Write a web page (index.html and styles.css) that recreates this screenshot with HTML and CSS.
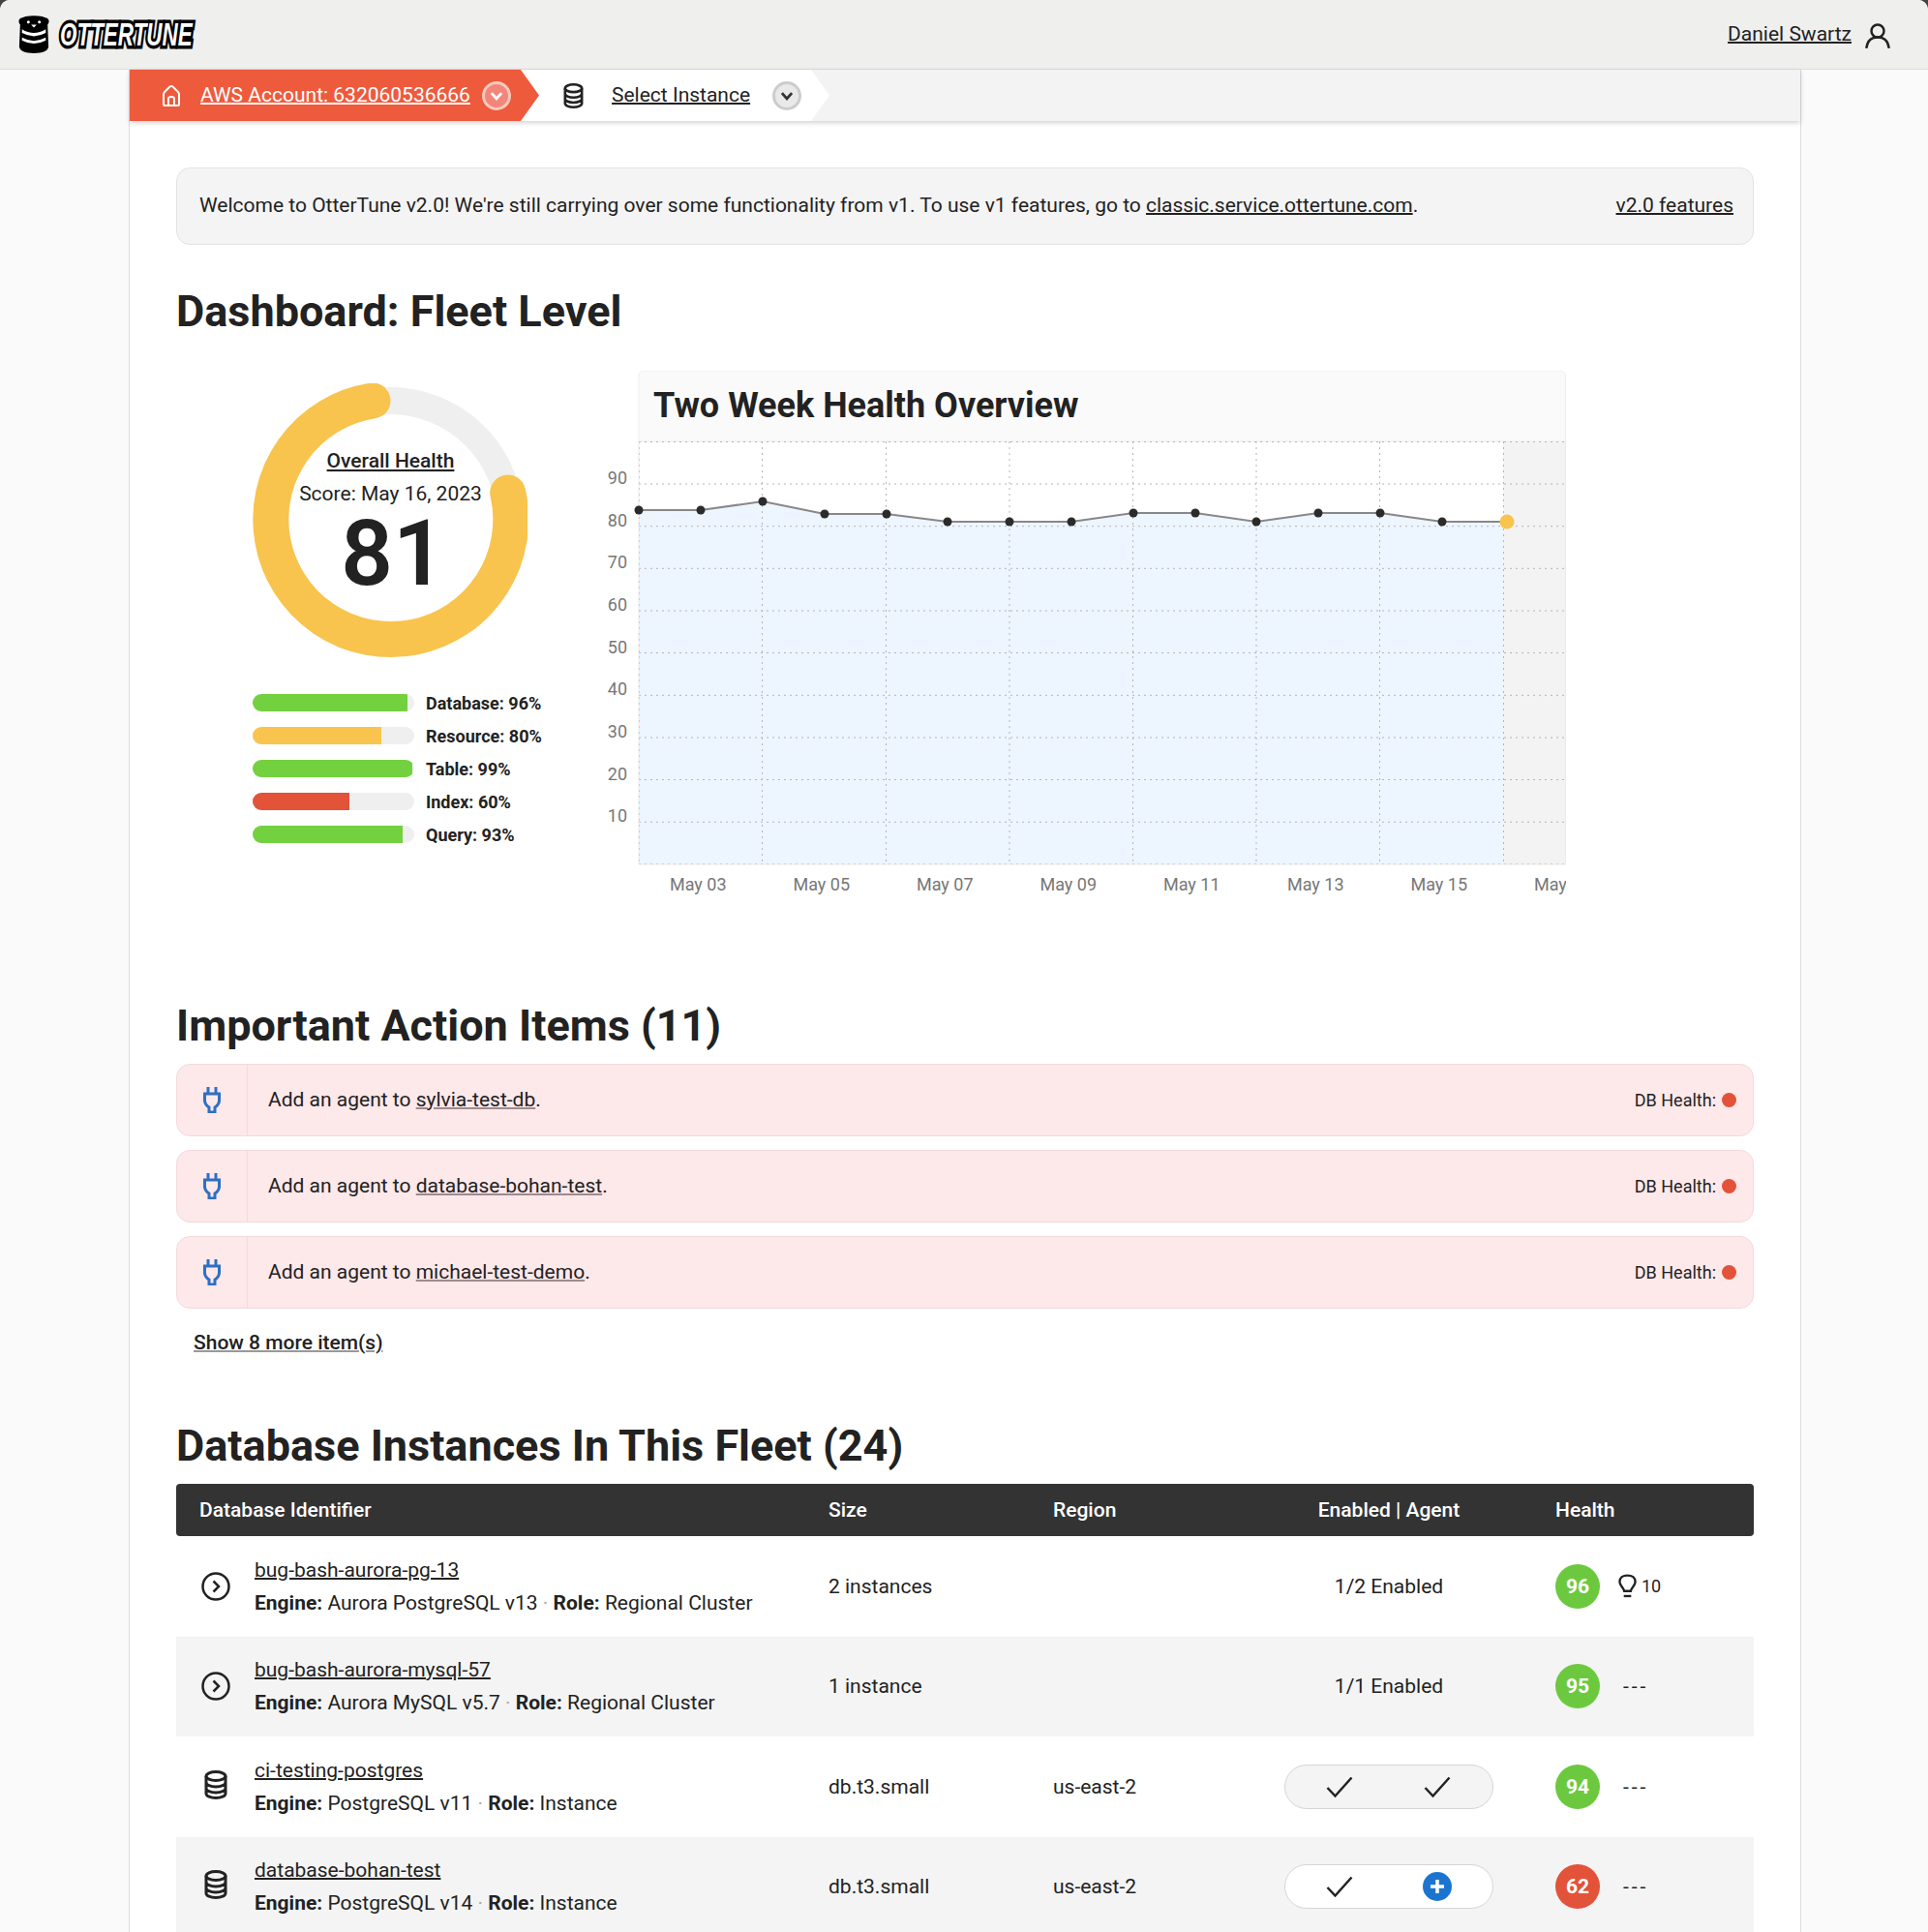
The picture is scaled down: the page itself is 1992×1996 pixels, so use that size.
FILE: index.html
```html
<!DOCTYPE html>
<html>
<head>
    <title>OtterTune</title>
    <link rel="stylesheet" href="styles.css">
</head>
<body>
<div class="page">
    <header class="topbar">
        <div class="logo">
            <svg class="logo-mark" viewBox="0 0 36 42">
                <path d="M3 3 L9 1 Q18 -1 27 1 L33 3 Q36 6 33 10 L34 34 Q33 41 18 41 Q3 41 2 34 L3 10 Q0 6 3 3Z" fill="#000"/>
                <circle cx="12" cy="7" r="1.6" fill="#fff"/>
                <circle cx="24" cy="7" r="1.6" fill="#fff"/>
                <path d="M15 10 H21 L18 13Z" fill="#fff"/>
                <path d="M5 15 Q18 23 31 15 L31 19 Q18 26 5 19Z M5 24 Q18 31 31 24 L31 27 Q18 34 5 27Z" fill="#fff"/>
            </svg>
            <span class="logo-text">OTTERTUNE</span>
        </div>
        <div class="user">
            <a href="#">Daniel Swartz</a>
            <svg class="user-icon" viewBox="0 0 26 26"><circle cx="13" cy="8" r="6.5"/><path d="M1.5 25 C2.5 18 7 14.5 13 14.5 S23.5 18 24.5 25"/></svg>
        </div>
    </header>

    <main class="content">
        <nav class="crumbs">
            <div class="crumb crumb-account">
                <svg class="crumb-home" viewBox="0 0 20 24"><path d="M2 21 V10.500 Q2 9 3.500 7.500 L8.500 2.500 Q10 1.500 11.500 2.500 L16.500 7.500 Q18 9 18 10.500 V21 Q18 22 17 22 H3 Q2 22 2 21Z"/><path d="M7 22 V15 Q7 13 10 13 Q13 13 13 15 V22"/></svg>
                <a href="#">AWS Account: 632060536666</a>
                <span class="crumb-toggle"><svg viewBox="0 0 14 14"><path d="M2.500 4.500 L7 9.500 L11.500 4.500"/></svg></span>
            </div>
            <div class="crumb crumb-instance">
                <svg class="db-icon crumb-db" viewBox="0 0 24 30"><ellipse cx="12" cy="6" rx="10" ry="4.5"/><path d="M2 6V24C2 26.5 6.500 28.500 12 28.500S22 26.500 22 24V6M2 12.500C2 15 6.500 17 12 17S22 15 22 12.500M2 18.500C2 21 6.500 23 12 23S22 21 22 18.500"/></svg>
                <a href="#">Select Instance</a>
                <span class="crumb-toggle"><svg viewBox="0 0 14 14"><path d="M2.500 4.500 L7 9.500 L11.500 4.500"/></svg></span>
            </div>
        </nav>

        <div class="inner">
            <div class="notice">
                <span>Welcome to OtterTune v2.0! We're still carrying over some functionality from v1. To use v1 features, go to <a href="#">classic.service.ottertune.com</a>.</span>
                <a href="#">v2.0 features</a>
            </div>

            <h2>Dashboard: Fleet Level</h2>
            <section class="overview">
                <div class="health">
                    <svg class="gauge" viewBox="261 395 284 284">
                        <circle class="gauge-track" cx="403" cy="537" r="124"/>
                        <path class="gauge-arc" d="M524.700 508 A124 124 0 1 1 385 413"/>
                        <text class="gauge-title" x="403.500" y="482">Overall Health</text>
                        <text class="gauge-date" x="403.500" y="516">Score: May 16, 2023</text>
                        <text class="gauge-score" x="406" y="603">81</text>
                    </svg>
                    <ul class="meters">
                        <li><span class="meter"><span class="meter-fill good" style="width: 160px"></span></span>Database: 96%</li>
                        <li><span class="meter"><span class="meter-fill warn" style="width: 133px"></span></span>Resource: 80%</li>
                        <li><span class="meter"><span class="meter-fill good" style="width: 165px"></span></span>Table: 99%</li>
                        <li><span class="meter"><span class="meter-fill bad" style="width: 100px"></span></span>Index: 60%</li>
                        <li><span class="meter"><span class="meter-fill good" style="width: 155px"></span></span>Query: 93%</li>
                    </ul>
                </div>

                <svg class="chart" viewBox="620 383 998 550">
                    <path class="chart-head" d="M660 456 V389 Q660 383 666 383 H1612 Q1617.500 383 1617.500 389 V456Z"/>
                    <text class="chart-title" x="675" y="431">Two Week Health Overview</text>
                    <rect class="chart-future" x="1553" y="456" width="64.500" height="437"/>
                    <path class="chart-area" d="M660 527 L724 527 L788 518 L852 531 L916 531 L979 539 L1043 539 L1107 539 L1171 530 L1235 530 L1298 539 L1362 530 L1426 530 L1490 539 L1553 539 V893 H660Z"/>
                    <g class="chart-grid">
                        <path d="M660 456.500 H1617"/>
                        <path d="M660 500 H1617"/>
                        <path d="M660 543.700 H1617"/>
                        <path d="M660 587.300 H1617"/>
                        <path d="M660 631 H1617"/>
                        <path d="M660 674.500 H1617"/>
                        <path d="M660 718.300 H1617"/>
                        <path d="M660 762 H1617"/>
                        <path d="M660 805.500 H1617"/>
                        <path d="M660 849.300 H1617"/>
                        <path d="M660 892.500 H1617"/>
                        <path d="M660.500 456 V893"/>
                        <path d="M787.500 456 V893"/>
                        <path d="M915.500 456 V893"/>
                        <path d="M1043 456 V893"/>
                        <path d="M1170.500 456 V893"/>
                        <path d="M1298 456 V893"/>
                        <path d="M1425.500 456 V893"/>
                        <path d="M1553.500 456 V893"/>
                    </g>
                    <path class="chart-border" d="M660 456 V893 H1617.500 V456"/>
                    <path class="chart-line" d="M660 527 L724 527 L788 518 L852 531 L916 531 L979 539 L1043 539 L1107 539 L1171 530 L1235 530 L1298 539 L1362 530 L1426 530 L1490 539 L1557 539"/>
                    <g class="chart-points">
                        <circle cx="660" cy="527" r="4.500"/>
                        <circle cx="724" cy="527" r="4.500"/>
                        <circle cx="788" cy="518" r="4.500"/>
                        <circle cx="852" cy="531" r="4.500"/>
                        <circle cx="916" cy="531" r="4.500"/>
                        <circle cx="979" cy="539" r="4.500"/>
                        <circle cx="1043" cy="539" r="4.500"/>
                        <circle cx="1107" cy="539" r="4.500"/>
                        <circle cx="1171" cy="530" r="4.500"/>
                        <circle cx="1235" cy="530" r="4.500"/>
                        <circle cx="1298" cy="539" r="4.500"/>
                        <circle cx="1362" cy="530" r="4.500"/>
                        <circle cx="1426" cy="530" r="4.500"/>
                        <circle cx="1490" cy="539" r="4.500"/>
                    </g>
                    <circle class="chart-today" cx="1557" cy="539" r="7.500"/>
                    <g class="chart-y">
                        <text x="648" y="500">90</text>
                        <text x="648" y="544">80</text>
                        <text x="648" y="587">70</text>
                        <text x="648" y="631">60</text>
                        <text x="648" y="675">50</text>
                        <text x="648" y="718">40</text>
                        <text x="648" y="762">30</text>
                        <text x="648" y="806">20</text>
                        <text x="648" y="849">10</text>
                    </g>
                    <g class="chart-x">
                        <text x="692" y="920">May 03</text>
                        <text x="819.500" y="920">May 05</text>
                        <text x="947" y="920">May 07</text>
                        <text x="1074.500" y="920">May 09</text>
                        <text x="1202" y="920">May 11</text>
                        <text x="1330" y="920">May 13</text>
                        <text x="1457.500" y="920">May 15</text>
                        <text x="1585" y="920">May 17</text>
                    </g>
                </svg>
            </section>

            <h2>Important Action Items (11)</h2>
            <div class="alerts">
                <div class="alert">
                    <div class="alert-icon"><svg class="plug" viewBox="0 0 18 27"><path d="M5 0V7M13 0V7M1.500 7H16.500V14Q16.500 18 12 21V26H6V21Q1.500 18 1.500 14Z"/></svg></div>
                    <div class="alert-text">Add an agent to <a href="#">sylvia-test-db</a>.</div>
                    <div class="alert-health">DB Health:<span class="dot"></span></div>
                </div>
                <div class="alert">
                    <div class="alert-icon"><svg class="plug" viewBox="0 0 18 27"><path d="M5 0V7M13 0V7M1.500 7H16.500V14Q16.500 18 12 21V26H6V21Q1.500 18 1.500 14Z"/></svg></div>
                    <div class="alert-text">Add an agent to <a href="#">database-bohan-test</a>.</div>
                    <div class="alert-health">DB Health:<span class="dot"></span></div>
                </div>
                <div class="alert">
                    <div class="alert-icon"><svg class="plug" viewBox="0 0 18 27"><path d="M5 0V7M13 0V7M1.500 7H16.500V14Q16.500 18 12 21V26H6V21Q1.500 18 1.500 14Z"/></svg></div>
                    <div class="alert-text">Add an agent to <a href="#">michael-test-demo</a>.</div>
                    <div class="alert-health">DB Health:<span class="dot"></span></div>
                </div>
            </div>
            <a class="show-more" href="#">Show 8 more item(s)</a>

            <h2 class="fleet-title">Database Instances In This Fleet (24)</h2>
            <div class="fleet">
                <div class="fleet-head">
                    <div>Database Identifier</div>
                    <div>Size</div>
                    <div>Region</div>
                    <div class="enabled-col">Enabled | Agent</div>
                    <div>Health</div>
                </div>

                <div class="fleet-row">
                    <div class="db-cell">
                        <svg class="cluster-icon" viewBox="0 0 30 30"><circle cx="15" cy="15" r="13.500"/><path d="M12.500 9.500 L18 15 L12.500 20.500"/></svg>
                        <div>
                            <a href="#">bug-bash-aurora-pg-13</a>
                            <p><b>Engine:</b> Aurora PostgreSQL v13 <i>·</i> <b>Role:</b> Regional Cluster</p>
                        </div>
                    </div>
                    <div>2 instances</div>
                    <div></div>
                    <div class="enabled-col">1/2 Enabled</div>
                    <div class="health-cell">
                        <span class="badge good">96</span>
                        <svg class="bulb" viewBox="0 0 20 26"><path d="M6.500 18.500 C6 15 1.500 13 1.500 8.500 C1.500 4 5 1.500 10 1.500 S18.500 4 18.500 8.500 C18.500 13 14 15 13.500 18.500Z"/><path d="M6 24 H14"/></svg>
                        <span class="tips">10</span>
                    </div>
                </div>

                <div class="fleet-row">
                    <div class="db-cell">
                        <svg class="cluster-icon" viewBox="0 0 30 30"><circle cx="15" cy="15" r="13.500"/><path d="M12.500 9.500 L18 15 L12.500 20.500"/></svg>
                        <div>
                            <a href="#">bug-bash-aurora-mysql-57</a>
                            <p><b>Engine:</b> Aurora MySQL v5.7 <i>·</i> <b>Role:</b> Regional Cluster</p>
                        </div>
                    </div>
                    <div>1 instance</div>
                    <div></div>
                    <div class="enabled-col">1/1 Enabled</div>
                    <div class="health-cell"><span class="badge good">95</span><span class="none">---</span></div>
                </div>

                <div class="fleet-row">
                    <div class="db-cell">
                        <svg class="db-icon" viewBox="0 0 24 30"><ellipse cx="12" cy="6" rx="10" ry="4.5"/><path d="M2 6V24C2 26.500 6.500 28.500 12 28.500S22 26.500 22 24V6M2 12.500C2 15 6.500 17 12 17S22 15 22 12.500M2 18.500C2 21 6.500 23 12 23S22 21 22 18.500"/></svg>
                        <div>
                            <a href="#">ci-testing-postgres</a>
                            <p><b>Engine:</b> PostgreSQL v11 <i>·</i> <b>Role:</b> Instance</p>
                        </div>
                    </div>
                    <div>db.t3.small</div>
                    <div>us-east-2</div>
                    <div class="toggle-pill filled">
                        <svg class="check" viewBox="0 0 28 24"><path d="M1.500 13 L9.500 21.500 L26.500 2.500"/></svg>
                        <svg class="check" viewBox="0 0 28 24"><path d="M1.500 13 L9.500 21.500 L26.500 2.500"/></svg>
                    </div>
                    <div class="health-cell"><span class="badge good">94</span><span class="none">---</span></div>
                </div>

                <div class="fleet-row">
                    <div class="db-cell">
                        <svg class="db-icon" viewBox="0 0 24 30"><ellipse cx="12" cy="6" rx="10" ry="4.5"/><path d="M2 6V24C2 26.500 6.500 28.500 12 28.500S22 26.500 22 24V6M2 12.500C2 15 6.500 17 12 17S22 15 22 12.500M2 18.500C2 21 6.500 23 12 23S22 21 22 18.500"/></svg>
                        <div>
                            <a href="#">database-bohan-test</a>
                            <p><b>Engine:</b> PostgreSQL v14 <i>·</i> <b>Role:</b> Instance</p>
                        </div>
                    </div>
                    <div>db.t3.small</div>
                    <div>us-east-2</div>
                    <div class="toggle-pill">
                        <svg class="check" viewBox="0 0 28 24"><path d="M1.500 13 L9.500 21.500 L26.500 2.500"/></svg>
                        <svg class="add" viewBox="0 0 30 30"><circle cx="15" cy="15" r="15"/><path d="M15 8V22M8 15H22"/></svg>
                    </div>
                    <div class="health-cell"><span class="badge bad">62</span><span class="none">---</span></div>
                </div>
            </div>
        </div>
    </main>
</div>
</body>
</html>
```

FILE: styles.css
```css
html, body {
    margin: 0;
    height: 100%;
    overflow: hidden;
    background: #444;
}
.page {
    height: 1996px;
    overflow: hidden;
    border-radius: 10px 10px 0 0;
    background: #fafafa;
    font-family: 'Roboto', sans-serif;
    font-size: 21px;
    color: #222;
}
a {
    color: inherit;
    text-decoration-thickness: 1.500px;
}
p {
    margin: 0;
}
h2 {
    margin: 0 0 -1px;
    padding-top: 1px;
    font-size: 45px;
    line-height: 52px;
    font-weight: 700;
    color: #222;
}

/* top bar */
.topbar {
    height: 71px;
    box-sizing: content-box;
    border-bottom: 1px solid #ddd;
    background: #efefee;
    display: flex;
    align-items: center;
    justify-content: space-between;
    padding: 0 39px 0 18px;
}
.logo {
    display: flex;
    align-items: center;
    gap: 10px;
}
.logo-mark {
    width: 34px;
    height: 40px;
}
.logo-text {
    display: inline-block;
    width: 140px;
    transform: scaleX(0.68);
    transform-origin: left center;
    font-family: 'Liberation Sans', sans-serif;
    font-size: 33px;
    font-weight: 700;
    font-style: italic;
    letter-spacing: 0;
    white-space: nowrap;
    color: #fff;
    -webkit-text-stroke: 7px #000;
    paint-order: stroke fill;
}
.user {
    display: flex;
    align-items: center;
    gap: 14px;
    padding-bottom: 1px;
}
.user-icon {
    width: 26px;
    height: 26px;
    fill: none;
    stroke: #222;
    stroke-width: 2.500;
    stroke-linecap: round;
    margin-top: 3px;
}

/* main column */
.content {
    margin-left: 133px;
    width: 1728px;
    height: 1924px;
    box-sizing: border-box;
    background: #fff;
    border-left: 1px solid #ddd;
    border-right: 1px solid #ddd;
}
.crumbs {
    height: 53px;
    display: flex;
    background: #f3f3f3;
    box-shadow: 0 2px 5px rgba(0, 0, 0, 0.18);
}
.crumb {
    height: 53px;
    box-sizing: border-box;
    display: flex;
    align-items: center;
}
.crumb a {
    position: relative;
    top: -1px;
}
.crumb-account {
    position: relative;
    z-index: 1;
    width: 423px;
    padding-left: 33px;
    background: #ee5a3c;
    color: #fff;
    clip-path: polygon(0 0, 404px 0, 423px 50%, 404px 100%, 0 100%);
}
.crumb-instance {
    width: 319px;
    margin-left: -19px;
    padding-left: 44px;
    background: #fff;
    clip-path: polygon(0 0, 300px 0, 319px 50%, 300px 100%, 0 100%);
}
.crumb-home {
    width: 20px;
    height: 24px;
    margin-right: 20px;
    fill: none;
    stroke: #fff;
    stroke-width: 2;
}
.crumb-db {
    margin-right: 29px;
    width: 21px;
    height: 26px;
}
.crumb-toggle {
    width: 30px;
    height: 30px;
    box-sizing: border-box;
    border-radius: 50%;
    margin-left: 12px;
    display: flex;
    align-items: center;
    justify-content: center;
    border: 3px solid #f8c8bf;
    background: #f2867a;
}
.crumb-instance .crumb-toggle {
    margin-left: 23px;
    border-color: #ccc;
    background: #e9e9e9;
}
.crumb-toggle svg {
    width: 16px;
    height: 16px;
    fill: none;
    stroke: #fff;
    stroke-width: 2.500;
}
.crumb-instance .crumb-toggle svg {
    stroke: #333;
}
.inner {
    padding: 48px 48px 0 48px;
}
.notice {
    height: 80px;
    box-sizing: border-box;
    display: flex;
    align-items: center;
    justify-content: space-between;
    padding: 0 20px 2px 23px;
    margin-bottom: 42px;
    border: 1px solid #e3e3e3;
    border-radius: 14px;
    background: #f4f4f4;
}

/* dashboard */
.overview {
    display: flex;
    height: 650px;
    margin-top: 36px;
}
.health {
    width: 438px;
    padding-left: 79px;
    box-sizing: border-box;
    padding-top: 13px;
}
.gauge {
    display: block;
    width: 284px;
    height: 284px;
}
.gauge-track {
    fill: none;
    stroke: #efefef;
    stroke-width: 28;
}
.gauge-arc {
    fill: none;
    stroke: #f8c44e;
    stroke-width: 37;
    stroke-linecap: round;
}
.gauge-title {
    font-weight: 500;
    text-anchor: middle;
    text-decoration: underline;
    fill: #222;
}
.gauge-date {
    text-anchor: middle;
    fill: #222;
}
.gauge-score {
    font-size: 94px;
    font-weight: 600;
    text-anchor: middle;
    fill: #222;
}
.meters {
    list-style: none;
    margin: 29px 0 0;
    padding: 0;
}
.meters li {
    height: 34px;
    display: flex;
    align-items: center;
    font-size: 18px;
    font-weight: 700;
    gap: 12px;
}
.meter {
    width: 167px;
    height: 18px;
    border-radius: 9px;
    overflow: hidden;
    background: #efefef;
}
.meter-fill {
    display: block;
    height: 100%;
}
.good {
    background: #73d13f;
}
.warn {
    background: #f8c44e;
}
.bad {
    background: #e2533a;
}
.chart {
    display: block;
    width: 998px;
    height: 550px;
}
.chart-head {
    fill: #fafafa;
    stroke: #eee;
}
.chart-title {
    font-size: 36px;
    font-weight: 700;
    fill: #222;
}
.chart-future {
    fill: #f3f3f3;
}
.chart-area {
    fill: #edf5fe;
}
.chart-grid path {
    fill: none;
    stroke: #b5b5b5;
    stroke-width: 1;
    stroke-dasharray: 2 4;
}
.chart-border {
    fill: none;
    stroke: #eaeaea;
}
.chart-line {
    fill: none;
    stroke: #888;
    stroke-width: 2;
}
.chart-points circle {
    fill: #2b2b2b;
}
.chart-today {
    fill: #f8c44e;
}
.chart-y text {
    font-size: 18px;
    fill: #777;
    text-anchor: end;
}
.chart-x text {
    font-size: 18px;
    fill: #777;
}

/* action items */
.alerts {
    margin-top: 14px;
    display: flex;
    flex-direction: column;
    gap: 14px;
}
.alert {
    height: 75px;
    box-sizing: border-box;
    display: flex;
    align-items: center;
    border: 1px solid #f4dadd;
    border-radius: 14px;
    background: #fde8ea;
}
.alert-icon {
    width: 72px;
    height: 100%;
    display: flex;
    align-items: center;
    justify-content: center;
    border-right: 1px solid #f4dadd;
}
.plug {
    width: 18px;
    height: 27px;
    fill: none;
    stroke: #2f6fc4;
    stroke-width: 3;
}
.alert-text {
    flex: 1;
    padding: 0 0 2px 21px;
}
.alert-text a {
    text-decoration-color: #a08a8e;
}
.alert-health {
    display: flex;
    align-items: center;
    gap: 6px;
    padding-right: 17px;
    font-size: 18px;
}
.dot {
    width: 15px;
    height: 15px;
    border-radius: 50%;
    background: #e2533a;
}
.show-more {
    display: inline-block;
    margin: 22px 0 0 18px;
    line-height: 26px;
    font-weight: 500;
    text-decoration-color: #999;
}
.fleet-title {
    margin-top: 67px;
}

/* fleet table */
.fleet {
    margin-top: 14px;
}
.fleet-head, .fleet-row {
    display: grid;
    grid-template-columns: 674px 232px 239px 280px 1fr;
    align-items: center;
}
.fleet-head {
    height: 54px;
    padding: 0;
    border-radius: 4px;
    background: #333;
    color: #fff;
    font-weight: 500;
}
.fleet-head > div:first-child {
    padding-left: 24px;
}
.fleet-row {
    height: 103.500px;
}
.fleet-row:nth-child(odd) {
    background: #f4f4f4;
}
.enabled-col {
    width: 216px;
    text-align: center;
}
.db-cell {
    display: flex;
    align-items: center;
}
.db-cell > svg {
    flex: none;
    width: 30px;
    height: 30px;
    margin: 0 25px 0 26px;
}
.db-cell a {
    display: block;
    line-height: 26px;
    margin-bottom: 8px;
}
.db-cell p {
    line-height: 26px;
}
.db-cell b {
    font-weight: 700;
}
.db-cell i {
    font-style: normal;
    color: #aaa;
}
.cluster-icon {
    fill: none;
    stroke: #222;
    stroke-width: 2.500;
}
.db-cell > .db-icon {
    width: 24px;
    height: 30px;
    margin: 0 28px 4px 29px;
}
.db-icon {
    fill: none;
    stroke: #222;
    stroke-width: 3;
}
.toggle-pill {
    width: 216px;
    height: 46px;
    box-sizing: border-box;
    border: 1px solid #d5d5d5;
    border-radius: 23px;
    background: #fff;
    display: flex;
    align-items: center;
    justify-content: space-between;
    padding: 0 43px 0 42px;
}
.toggle-pill.filled {
    background: #f4f4f4;
}
.check {
    width: 28px;
    height: 24px;
    fill: none;
    stroke: #222;
    stroke-width: 2.500;
}
.add {
    width: 30px;
    height: 30px;
    margin-right: -1px;
}
.add circle {
    fill: #1b75d0;
}
.add path {
    stroke: #fff;
    stroke-width: 3.500;
    fill: none;
}
.health-cell {
    display: flex;
    align-items: center;
}
.badge {
    width: 46px;
    height: 46px;
    border-radius: 50%;
    display: flex;
    align-items: center;
    justify-content: center;
    color: #fff;
    font-weight: 700;
}
.badge.good {
    background: #6cc93f;
}
.badge.bad {
    background: #e2533a;
}
.bulb {
    width: 19px;
    height: 25px;
    margin-left: 19px;
    fill: none;
    stroke: #222;
    stroke-width: 2.500;
}
.tips {
    margin-left: 5px;
    font-size: 18px;
}
.none {
    margin-left: 24px;
    letter-spacing: 3px;
}
```
